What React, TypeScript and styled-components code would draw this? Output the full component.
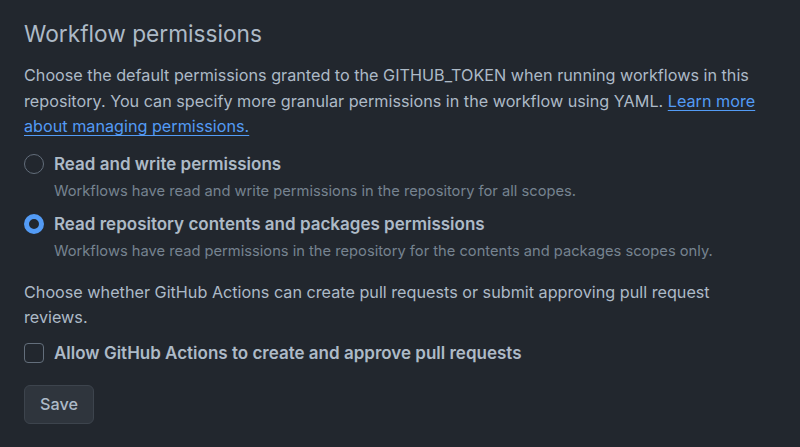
import React from "react";
import styled, { createGlobalStyle } from "styled-components";

const Global = createGlobalStyle`
  html, body { margin: 0; padding: 0; background: #22272e; }
  body { font-family: Inter, "Noto Sans", "Liberation Sans", sans-serif; color: #adbac7; }
`;

const Page = styled.div`
  box-sizing: border-box;
  width: 800px;
  height: 447px;
  padding: 17px 16px 0 24px;
  display: flex;
  flex-direction: column;
`;

const Heading = styled.h2`
  margin: 0 0 12px 0;
  font-size: 22.7px;
  line-height: 34px;
  font-weight: 400;
  color: #adbac7;
`;

const Paragraph = styled.p<{ $mb?: number }>`
  margin: 0 0 ${(p) => p.$mb ?? 0}px 0;
  font-size: 16.2px;
  line-height: 25.5px;
  color: #adbac7;
`;

const Link = styled.a`
  color: #539bf5;
  text-decoration: underline;
  text-underline-offset: 3px;
`;

const OptionList = styled.div`
  display: flex;
  flex-direction: column;
  gap: 8px;
  margin-bottom: 17px;
`;

const Option = styled.label`
  display: grid;
  grid-template-columns: 20px 1fr;
  column-gap: 10px;
  row-gap: 2px;
  align-items: center;
`;

const Radio = styled.span<{ $checked?: boolean }>`
  box-sizing: border-box;
  width: 20px;
  height: 20px;
  border-radius: 50%;
  border: ${(p) => (p.$checked ? "5px solid #539bf5" : "1px solid #636e7b")};
  background: #22272e;
`;

const Box = styled.span`
  box-sizing: border-box;
  width: 20px;
  height: 20px;
  border-radius: 4px;
  border: 1px solid #636e7b;
  background: #22272e;
`;

const OptionLabel = styled.span`
  font-size: 17px;
  line-height: 26px;
  font-weight: 600;
  color: #adbac7;
`;

const OptionDesc = styled.span`
  grid-column: 2;
  font-size: 14.7px;
  line-height: 24px;
  color: #768390;
`;

const Button = styled.button`
  align-self: flex-start;
  box-sizing: border-box;
  margin-top: 19px;
  width: 70px;
  height: 39px;
  border-radius: 6px;
  border: 1px solid #3d444d;
  background: #2f353d;
  color: #adbac7;
  font-family: inherit;
  font-size: 16.2px;
  font-weight: 500;
`;

export default function App() {
  return (
    <>
      <Global />
      <Page>
        <Heading>Workflow permissions</Heading>
        <Paragraph $mb={11}>
          Choose the default permissions granted to the GITHUB_TOKEN when running workflows in this
          repository. You can specify more granular permissions in the workflow using YAML.{" "}
          <Link href="#">Learn more about managing permissions.</Link>
        </Paragraph>
        <OptionList>
          <Option>
            <Radio />
            <OptionLabel>Read and write permissions</OptionLabel>
            <OptionDesc>Workflows have read and write permissions in the repository for all scopes.</OptionDesc>
          </Option>
          <Option>
            <Radio $checked />
            <OptionLabel>Read repository contents and packages permissions</OptionLabel>
            <OptionDesc>
              Workflows have read permissions in the repository for the contents and packages scopes only.
            </OptionDesc>
          </Option>
        </OptionList>
        <Paragraph $mb={9}>
          Choose whether GitHub Actions can create pull requests or submit approving pull request
          <br />
          reviews.
        </Paragraph>
        <Option>
          <Box />
          <OptionLabel>Allow GitHub Actions to create and approve pull requests</OptionLabel>
        </Option>
        <Button>Save</Button>
      </Page>
    </>
  );
}
